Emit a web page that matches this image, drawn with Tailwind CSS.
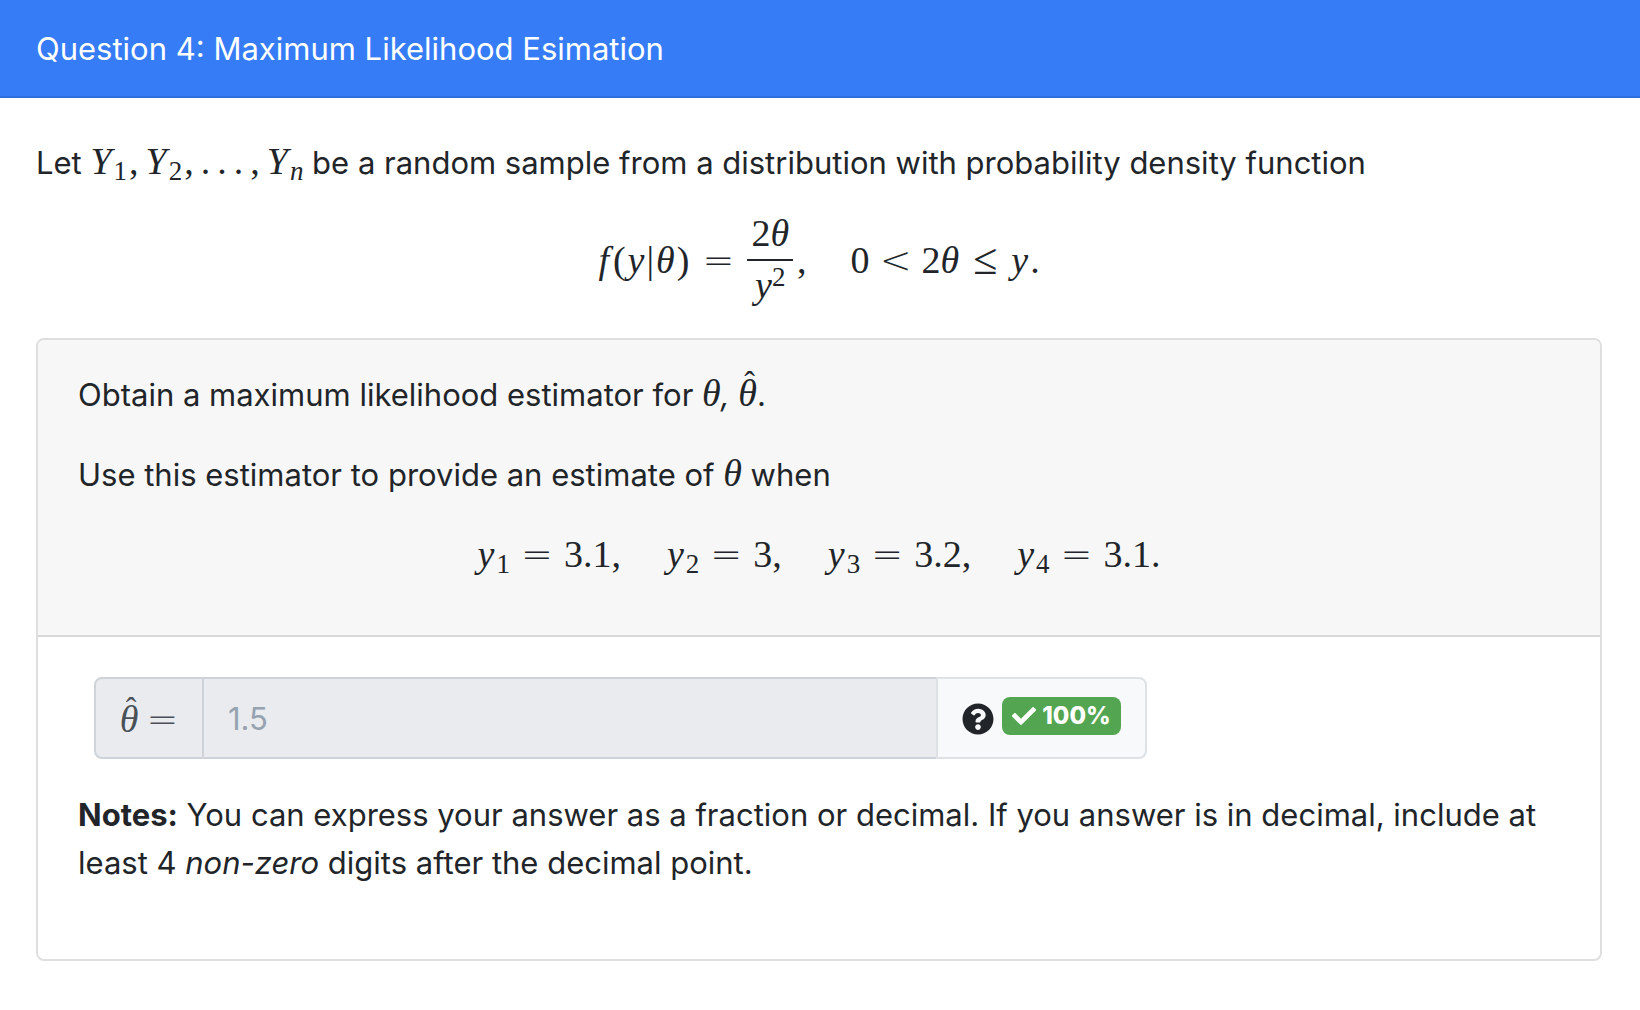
<!DOCTYPE html>
<html lang="en">
<head>
<meta charset="utf-8">
<meta name="viewport" content="width=device-width, initial-scale=1">
<title>Question 4: Maximum Likelihood Esimation</title>
<script src="https://cdn.jsdelivr.net/npm/@tailwindcss/browser@4"></script>
</head>
<body class="min-h-screen bg-white font-['Inter',sans-serif] text-[31px] leading-[48px] text-[#212529]">
<header class="border-b-2 border-[#2f6fdb] bg-[#357cf6] px-9 pt-[25px] pb-[23px] text-white">
  <h1>Question 4: Maximum Likelihood Esimation</h1>
</header>
<main class="pt-[41px] pr-[38px] pb-10 pl-9">
  <p>Let <span class="inline-flex items-baseline gap-[7px] font-['Liberation_Serif',serif] text-[38px] leading-none"><span><i>Y</i><sub class="bottom-0 mx-0.5 align-[-6px] text-[27px] leading-none">1</sub>,</span><span><i>Y</i><sub class="bottom-0 mx-0.5 align-[-6px] text-[27px] leading-none">2</sub>,</span><span>.</span><span>.</span><span>.</span><span>,</span><span><i>Y</i><sub class="bottom-0 ml-0.5 align-[-6px] text-[27px] leading-none"><i>n</i></sub></span></span> be a random sample from a distribution with probability density function</p>

  <div class="mt-6 flex items-center justify-center font-['Liberation_Serif',serif] text-[38px] leading-[48px]" role="math">
    <span><i class="pr-1">f</i>(<i class="px-0.5">y</i>|<i class="px-0.5">θ</i>)</span>
    <span class="w-[58px] text-center font-['DejaVu_Sans',sans-serif] font-extralight">=</span>
    <span class="flex flex-col items-center">
      <span class="border-b-2 border-[#212529] px-1 pb-1 leading-[44px]">2<i>θ</i></span>
      <span class="leading-[48px]"><i>y</i><sup class="top-0 align-[12px] text-[27px] leading-none">2</sup></span>
    </span>
    <span class="pl-1">,</span>
    <span class="pl-11">0</span>
    <span class="w-[52px] text-center font-['DejaVu_Sans',sans-serif] font-extralight">&lt;</span>
    <span>2<i>θ</i></span>
    <span class="w-[52px] text-center text-[44px]">≤</span>
    <span><i class="pr-0.5">y</i>.</span>
  </div>

  <section class="mt-[29px] overflow-hidden rounded-lg border-2 border-[#dfdfdf]">
    <div class="border-b-2 border-[#d8d8d8] bg-[#f7f7f7] px-10 pt-[31px] pb-[57px]">
      <p>Obtain a maximum likelihood estimator for <i class="font-['Liberation_Serif',serif] text-[38px] leading-none">θ</i><i>,</i> <span class="relative inline-block font-['Liberation_Serif',serif] text-[38px] leading-none"><i>θ</i><span class="absolute -top-2 left-1.5 text-[32px] leading-none">ˆ</span></span>.</p>
      <p class="mt-8">Use this estimator to provide an estimate of <i class="font-['Liberation_Serif',serif] text-[38px] leading-none">θ</i> when</p>
      <div class="mt-[31px] flex justify-center gap-[46px] font-['Liberation_Serif',serif] text-[38px] leading-[48px]" role="math">
        <span class="flex"><span><i>y</i><sub class="bottom-0 ml-0.5 align-[-6px] text-[27px] leading-none">1</sub></span><span class="w-[54px] text-center font-['DejaVu_Sans',sans-serif] font-extralight">=</span>3.1,</span>
        <span class="flex"><span><i>y</i><sub class="bottom-0 ml-0.5 align-[-6px] text-[27px] leading-none">2</sub></span><span class="w-[54px] text-center font-['DejaVu_Sans',sans-serif] font-extralight">=</span>3,</span>
        <span class="flex"><span><i>y</i><sub class="bottom-0 ml-0.5 align-[-6px] text-[27px] leading-none">3</sub></span><span class="w-[54px] text-center font-['DejaVu_Sans',sans-serif] font-extralight">=</span>3.2,</span>
        <span class="flex"><span><i>y</i><sub class="bottom-0 ml-0.5 align-[-6px] text-[27px] leading-none">4</sub></span><span class="w-[54px] text-center font-['DejaVu_Sans',sans-serif] font-extralight">=</span>3.1.</span>
      </div>
    </div>
    <div class="px-10 pt-10 pb-[72px]">
      <div class="ml-4 flex h-[82px] max-w-[1053px]">
        <label for="answer" class="flex w-[110px] shrink-0 items-center justify-center gap-2 rounded-l-lg border-2 border-[#cdd3d8] bg-[#e9ebef] pt-0.5 font-['Liberation_Serif',serif] text-[38px] text-[#495057]">
          <span class="relative inline-block leading-none"><i>θ</i><span class="absolute -top-2 left-1.5 text-[32px] leading-none">ˆ</span></span>
          <span class="font-['DejaVu_Sans',sans-serif] font-extralight">=</span>
        </label>
        <input id="answer" type="text" value="1.5" readonly class="-ml-0.5 min-w-0 flex-1 border-2 border-[#cdd3d8] bg-[#e9ebef] px-6 pt-0.5 text-[#95a2af]">
        <div class="-ml-0.5 flex w-[211px] shrink-0 items-center rounded-r-lg border-2 border-[#dee2e6] bg-[#f8f9fb] pt-0.5 pl-6">
          <button type="button" aria-label="Help">
            <svg class="size-8" viewBox="0 0 512 512" fill="#212529"><path d="M504 256c0 136.997-111.043 248-248 248S8 392.997 8 256C8 119.083 119.043 8 256 8s248 111.083 248 248zM262.655 90c-54.497 0-89.255 22.957-116.549 63.758-3.536 5.286-2.353 12.415 2.715 16.258l34.699 26.31c5.205 3.947 12.621 3.008 16.665-2.122 17.864-22.658 30.113-35.797 57.303-35.797 20.429 0 45.698 13.148 45.698 32.958 0 14.976-12.363 22.667-32.534 33.976C247.128 238.528 216 254.941 216 296v4c0 6.627 5.373 12 12 12h56c6.627 0 12-5.373 12-12v-1.333c0-28.462 83.186-29.647 83.186-106.667 0-58.002-60.165-102-116.531-102zM256 338c-25.365 0-46 20.635-46 46 0 25.364 20.635 46 46 46s46-20.636 46-46c0-25.364-20.635-46-46-46z"/></svg>
          </button>
          <span class="mb-1.5 ml-2 flex h-[38px] w-[119px] items-center justify-center gap-1.5 rounded-lg bg-[#53a551] text-[24px] leading-none font-extrabold text-white">
            <svg class="size-6" viewBox="0 0 512 512" fill="currentColor"><path d="M173.898 439.404l-166.4-166.4c-9.997-9.997-9.997-26.206 0-36.204l36.203-36.204c9.997-9.998 26.207-9.998 36.204 0L192 312.69 432.095 72.596c9.997-9.997 26.207-9.997 36.204 0l36.203 36.204c9.997 9.997 9.997 26.206 0 36.204l-294.4 294.401c-9.998 9.997-26.207 9.997-36.204-.001z"/></svg>
            <span>100%</span>
          </span>
        </div>
      </div>
      <p class="mt-8"><b>Notes:</b> You can express your answer as a fraction or decimal. If you answer is in decimal, include at least 4 <i>non-zero</i> digits after the decimal point.</p>
    </div>
  </section>
</main>
</body>
</html>
